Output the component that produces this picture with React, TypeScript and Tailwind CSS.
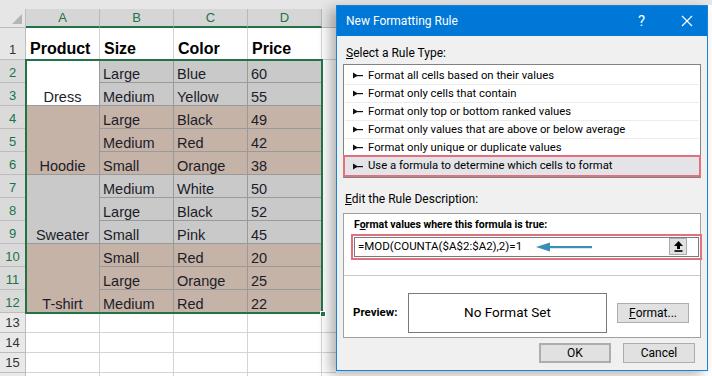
import React from 'react';

const GRAY = 'bg-[#c9c9c9]';
const BROWN = 'bg-[#c5b3a7]';

interface Item {
  size: string;
  color: string;
  price: string;
}

interface Group {
  name: string;
  aFill: string;
  fill: string;
  items: Item[];
}

const groups: Group[] = [
  {
    name: 'Dress',
    aFill: 'bg-white',
    fill: GRAY,
    items: [
      { size: 'Large', color: 'Blue', price: '60' },
      { size: 'Medium', color: 'Yellow', price: '55' },
    ],
  },
  {
    name: 'Hoodie',
    aFill: BROWN,
    fill: BROWN,
    items: [
      { size: 'Large', color: 'Black', price: '49' },
      { size: 'Medium', color: 'Red', price: '42' },
      { size: 'Small', color: 'Orange', price: '38' },
    ],
  },
  {
    name: 'Sweater',
    aFill: GRAY,
    fill: GRAY,
    items: [
      { size: 'Medium', color: 'White', price: '50' },
      { size: 'Large', color: 'Black', price: '52' },
      { size: 'Small', color: 'Pink', price: '45' },
    ],
  },
  {
    name: 'T-shirt',
    aFill: BROWN,
    fill: BROWN,
    items: [
      { size: 'Small', color: 'Red', price: '20' },
      { size: 'Large', color: 'Orange', price: '25' },
      { size: 'Medium', color: 'Red', price: '22' },
    ],
  },
];

const ruleTypes = [
  'Format all cells based on their values',
  'Format only cells that contain',
  'Format only top or bottom ranked values',
  'Format only values that are above or below average',
  'Format only unique or duplicate values',
  'Use a formula to determine which cells to format',
];

function ListArrow() {
  return (
    <svg width="10" height="7" viewBox="0 0 10 7" className="shrink-0">
      <polygon points="0,0.5 0,6.5 5,3.5" fill="#111" />
      <rect x="3" y="3" width="7" height="1.2" fill="#111" />
    </svg>
  );
}

function Sheet() {
  const cell = 'flex items-end px-[3px] pb-[1px] border-r border-b border-[#9a9a9a] text-[#1c1c2a]';
  return (
    <div className="w-[336px] shrink-0 flex flex-col font-['Liberation_Sans',Arial,sans-serif] text-[14.5px] leading-none bg-white">
      <div className="h-[9px] shrink-0 bg-[#e6e6e6]" />
      {/* column headers */}
      <div className="flex h-[19px] shrink-0 text-[13px] bg-[#e6e6e6]">
        <div className="w-[26px] border-r border-b border-[#bdbdbd] relative">
          <svg width="10" height="10" className="absolute right-[3px] bottom-[3px]">
            <polygon points="10,0 10,10 0,10" fill="#b5b5b5" />
          </svg>
        </div>
        {['A', 'B', 'C', 'D'].map((c) => (
          <div
            key={c}
            className="w-[74px] flex items-center justify-center bg-[#d6d6d6] border-r border-[#b9b9b9] border-b-2 border-b-[#217346] text-[#217346]"
          >
            {c}
          </div>
        ))}
        <div className="flex-1 border-b border-[#bdbdbd]" />
      </div>
      {/* row 1 */}
      <div className="flex h-[32px] shrink-0">
        <div className="w-[26px] flex items-end justify-center pb-[3px] bg-[#e6e6e6] border-r border-b border-[#bdbdbd] text-[13px] text-[#333]">
          1
        </div>
        {['Product', 'Size', 'Color', 'Price'].map((h) => (
          <div
            key={h}
            className="w-[74px] flex items-end px-[4px] pb-[2px] border-r border-b border-[#d4d4d4] font-bold text-[16px] text-black"
          >
            {h}
          </div>
        ))}
        <div className="flex-1 border-b border-[#d4d4d4]" />
      </div>
      {/* body */}
      <div className="flex shrink-0">
        <div className="w-[26px] flex flex-col text-[13px]">
          {Array.from({ length: 11 }, (_, i) => (
            <div
              key={i}
              className="h-[23px] shrink-0 flex items-end justify-center pb-[3px] bg-[#dadada] border-r border-b border-[#bdbdbd] text-[#217346]"
            >
              {i + 2}
            </div>
          ))}
          {[13, 14, 15].map((n) => (
            <div
              key={n}
              className="h-[20px] shrink-0 flex items-end justify-center pb-[3px] bg-[#e9e9e9] border-r border-b border-[#bdbdbd] text-[#333]"
            >
              {n}
            </div>
          ))}
          <div className="h-[20px] shrink-0 bg-[#e9e9e9] border-r border-[#bdbdbd]" />
        </div>
        <div className="w-[296px] flex flex-col">
          <div className="relative outline-2 outline-[#217346] -outline-offset-1">
            {groups.map((g) => (
              <div key={g.name} className="flex">
                <div className={`w-[74px] ${g.aFill} ${cell} justify-center`}>{g.name}</div>
                <div className="flex flex-col">
                  {g.items.map((it, i) => (
                    <div key={i} className={`flex h-[23px] shrink-0 ${g.fill}`}>
                      <div className={`w-[74px] ${cell}`}>{it.size}</div>
                      <div className={`w-[74px] ${cell}`}>{it.color}</div>
                      <div className={`w-[74px] ${cell}`}>{it.price}</div>
                    </div>
                  ))}
                </div>
              </div>
            ))}
            <div className="absolute right-[-4px] bottom-[-4px] w-[6px] h-[6px] bg-[#217346] border border-white" />
          </div>
          {[13, 14, 15, 16].map((n) => (
            <div key={n} className="flex h-[20px] shrink-0">
              {[0, 1, 2, 3].map((c) => (
                <div key={c} className="w-[74px] border-r border-b border-[#d4d4d4]" />
              ))}
            </div>
          ))}
        </div>
        <div className="flex-1 flex flex-col">
          <div className="h-[253px] shrink-0" />
          {[13, 14, 15, 16].map((n) => (
            <div key={n} className="h-[20px] shrink-0 border-b border-[#d4d4d4]" />
          ))}
        </div>
      </div>
    </div>
  );
}

function Dialog() {
  const btn =
    'h-[20px] w-[72px] flex items-center justify-center bg-[#e1e1e1] border border-[#adadad] text-[12px] text-black';
  return (
    <div className="w-[372px] h-[366px] shrink-0 flex flex-col bg-[#f0f0f0] border border-[#1883d7] shadow-[-6px_4px_12px_rgba(0,0,0,0.3)] font-['Roboto','Noto_Sans',sans-serif] text-[12px] text-black leading-none">
      <div className="h-[30px] shrink-0 flex items-center bg-[#0078d7] text-white pl-[9px] pr-[14px]">
        <div className="text-[12px] flex-1">New Formatting Rule</div>
        <div className="text-[15px] mr-[36px]">?</div>
        <svg width="12" height="12" viewBox="0 0 12 12">
          <path d="M1 1 L11 11 M11 1 L1 11" stroke="white" strokeWidth="1.2" />
        </svg>
      </div>
      <div className="flex-1 flex flex-col px-[6px]">
        <div className="mt-[11px] ml-[3px]">
          <span className="underline">S</span>elect a Rule Type:
        </div>
        <div className="mt-[5px] h-[114px] shrink-0 bg-white border border-[#828282] pt-[2px] px-[1px] flex flex-col text-[11.3px]">
          {ruleTypes.map((r, i) => {
            const sel = i === ruleTypes.length - 1;
            return (
              <div
                key={r}
                className={
                  sel
                    ? 'h-[18px] shrink-0 flex items-center gap-[5px] pl-[8px] bg-[#e3e3e8] outline-2 outline-[#e2707e]'
                    : 'h-[18px] shrink-0 flex items-center gap-[5px] pl-[8px] border-b border-[#ececec]'
                }
              >
                <ListArrow />
                <span>{r}</span>
              </div>
            );
          })}
        </div>
        <div className="mt-[15px] ml-[2px]">
          <span className="underline">E</span>dit the Rule Description:
        </div>
        <div className="mt-[8px] h-[125px] shrink-0 bg-white border border-[#a0a0a0] flex flex-col">
          <div className="h-[62px] shrink-0 flex flex-col px-[7px] border-b border-[#c8c8c8]">
            <div className="mt-[6px] ml-[3px] font-bold text-[10.5px]">
              F<span className="underline">o</span>rmat values where this formula is true:
            </div>
            <div className="mt-[3px] -mr-[9px] h-[26px] border-2 border-[#e2707e] p-[1px]">
              <div className="h-full flex items-center bg-white border border-[#7a7a7a] pl-[3px] pr-[1px] text-[11.5px]">
                <span>=MOD(COUNTA($A$2:$A2),2)=1</span>
                <svg width="56" height="10" viewBox="0 0 56 10" className="ml-[14px]">
                  <polygon points="0,5 14,0.5 14,9.5" fill="#3a8db5" />
                  <rect x="12" y="4" width="44" height="2.2" fill="#3a8db5" />
                </svg>
                <div className="flex-1" />
                <div className="w-[18px] h-[17px] mr-[10px] flex items-center justify-center bg-[#e1e1e1] border border-[#adadad]">
                  <svg width="9" height="11" viewBox="0 0 9 11">
                    <polygon points="4.5,0 9,5 0,5" fill="#000" />
                    <rect x="3" y="4.5" width="3" height="3.5" fill="#000" />
                    <rect x="0.5" y="9.2" width="8" height="1.6" fill="#000" />
                  </svg>
                </div>
              </div>
            </div>
          </div>
          <div className="flex-1 flex items-center pt-[12px] pl-[9px] pr-[11px]">
            <div className="w-[55px] font-bold text-[11.5px]">Preview:</div>
            <div className="w-[199px] h-[40px] flex items-center justify-center border border-[#7a7a7a] text-[13.5px]">
              No Format Set
            </div>
            <div className="flex-1" />
            <div className={btn}>
              <span className="underline">F</span>ormat...
            </div>
          </div>
        </div>
        <div className="mt-[5px] flex justify-end gap-[12px] pr-[6px]">
          <div className={`${btn} border-2 border-[#0078d7]`}>OK</div>
          <div className={btn}>Cancel</div>
        </div>
      </div>
    </div>
  );
}

export default function App() {
  return (
    <div className="w-[712px] h-[376px] overflow-hidden flex bg-white">
      <Sheet />
      <div className="flex-1 flex flex-col">
        <div className="h-[5px] shrink-0 bg-[#e6e6e6]" />
        <Dialog />
      </div>
    </div>
  );
}
